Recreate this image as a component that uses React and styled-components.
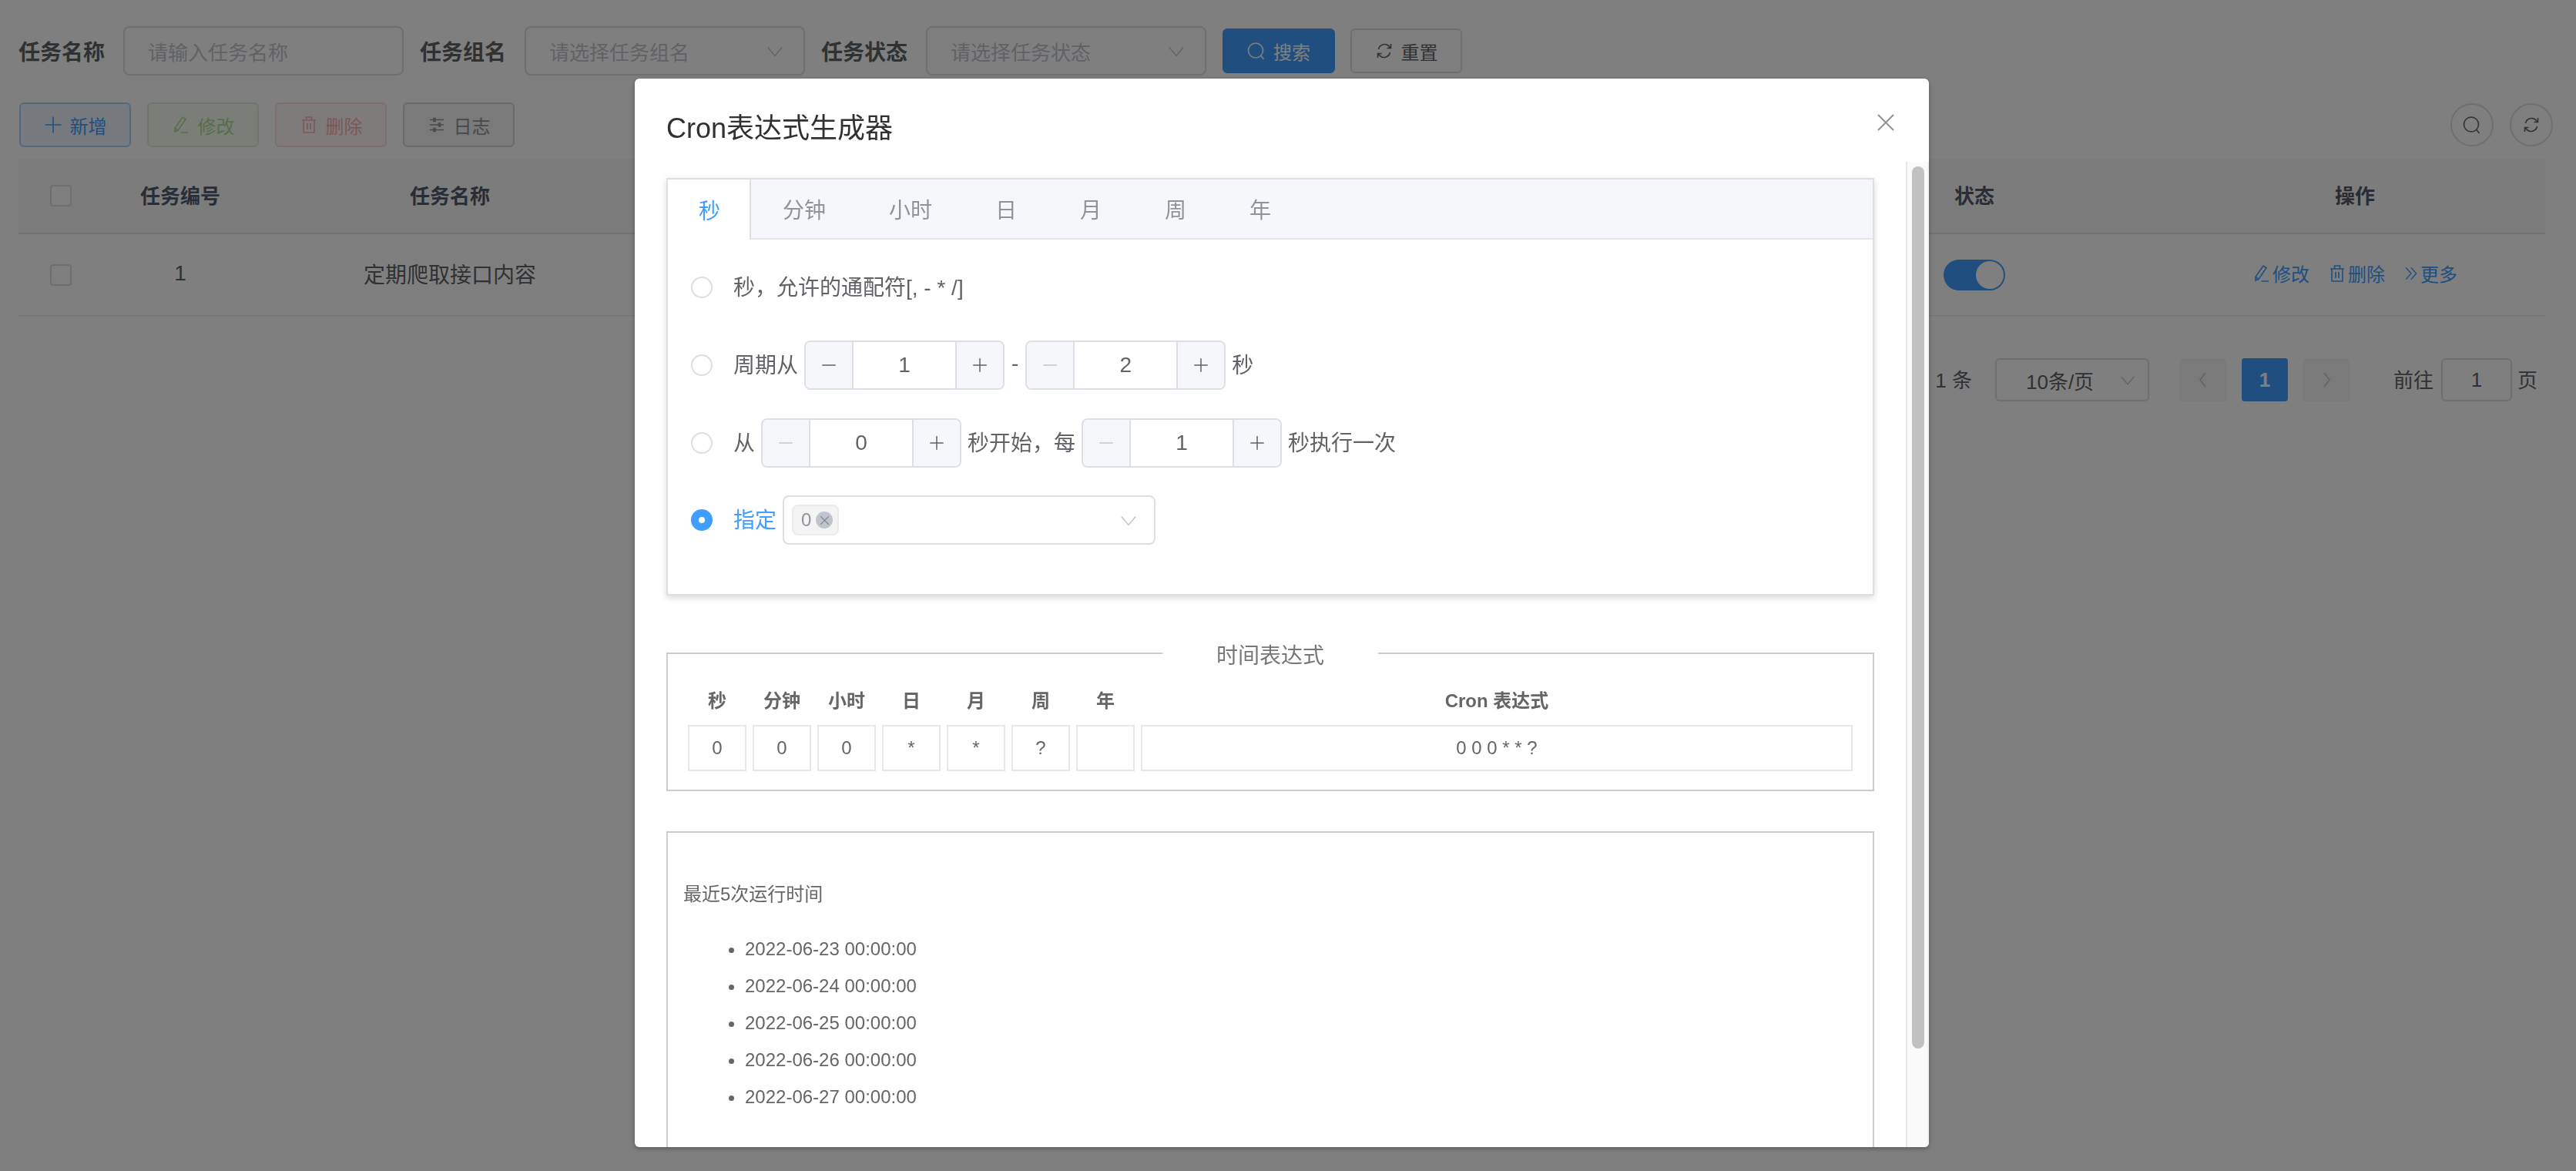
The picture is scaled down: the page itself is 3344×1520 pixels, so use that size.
import styled, { createGlobalStyle } from 'styled-components';

const FONT = `'Liberation Sans', 'Noto Sans CJK SC', sans-serif`;

const GlobalStyle = createGlobalStyle`
  html, body {
    margin: 0;
    height: 100%;
    overflow: hidden;
    background: #fff;
    font-family: ${FONT};
  }
  * { box-sizing: border-box; }
`;

const Svg = styled.svg`
  flex: none;
  fill: none;
  stroke: currentColor;
  stroke-width: ${(p) => p.$weight || 1.6};
`;

const icon = (d) =>
  function Icon({ size = 24, weight }) {
    return (
      <Svg $weight={weight} width={size} height={size} viewBox="0 0 24 24">
        <path d={d} />
      </Svg>
    );
  };

const PlusIcon = icon('M1.5 12H22.5M12 1.5V22.5');
const MinusIcon = icon('M1.5 12H22.5');
const EditIcon = icon('M4 16.5L14 2L18 4.8L8 19.3L4 21ZM4 16.5L8 19.3M11.5 22H21');
const TrashIcon = icon('M3 6H21M8.5 6V2H15.5V6M5 6V22H19V6M10 10V18M14 10V18');
const SlidersIcon = icon('M3 5.5H21M3 12H21M3 18.5H21M8 3.5H10V7.5H8ZM14.5 10H16.5V14H14.5ZM8 16.5H10V20.5H8Z');
const SearchIcon = icon('M11 2A9.5 9.5 0 1 0 11 21A9.5 9.5 0 1 0 11 2ZM17.5 18L21.5 23');
const RefreshIcon = icon('M4.5 10A8 8 0 0 1 18.5 6.5L20 8.5M19.5 14A8 8 0 0 1 5.5 17.5L4 15.5M20.5 3V8.5H15.5M3.5 21V15.5H8.5');
const DoubleArrowIcon = icon('M4 3L12 12L4 21M12 3L20 12L12 21');
const DownIcon = icon('M2 7L12 19L22 7');
const LeftIcon = icon('M15 3L8 12L15 21');
const RightIcon = icon('M9 3L16 12L9 21');
const CloseIcon = icon('M2 2L22 22M22 2L2 22');

const Page = styled.div`
  height: 1520px;
  padding-top: 34px;
  color: #606266;
`;

const SearchForm = styled.div`
  display: flex;
  align-items: center;
  padding-left: 24px;
`;

const FormLabel = styled.label`
  width: 112px;
  margin-right: 24px;
  font-size: 28px;
  font-weight: 700;
  white-space: nowrap;
`;

const FormField = styled.div`
  display: flex;
  align-items: center;
  justify-content: space-between;
  width: 364px;
  height: 64px;
  margin-right: 21px;
  padding: 0 26px 0 30px;
  border: 2px solid #dcdfe6;
  border-radius: 8px;
  font-size: 26px;
  color: #c0c4cc;
`;

const MiniButton = styled.div`
  display: flex;
  align-items: center;
  justify-content: center;
  gap: 10px;
  width: ${(p) => p.$width || 145}px;
  height: ${(p) => p.$height || 58}px;
  border: 2px solid ${(p) => p.$border};
  border-radius: 6px;
  background: ${(p) => p.$bg};
  color: ${(p) => p.$color};
  font-size: 24px;
  opacity: ${(p) => (p.$disabled ? 0.55 : 1)};
`;

const FormButtons = styled.div`
  display: flex;
  gap: 20px;
`;

const Toolbar = styled.div`
  display: flex;
  align-items: center;
  justify-content: space-between;
  margin-top: 35px;
  padding: 0 30px 0 25px;
`;

const ButtonGroup = styled.div`
  display: flex;
  gap: 21px;
`;

const CircleButton = styled.div`
  display: flex;
  align-items: center;
  justify-content: center;
  width: 56px;
  height: 56px;
  border: 2px solid #dcdfe6;
  border-radius: 50%;
  color: #606266;
`;

const Table = styled.div`
  margin-top: 15px;
`;

const TableRow = styled.div`
  display: grid;
  grid-template-columns: 110px 200px 500px 1482px 494px 494px;
  align-items: center;
  margin: 0 40px 0 24px;
  height: ${(p) => (p.$head ? 98 : 107)}px;
  background: ${(p) => (p.$head ? '#f8f8f9' : '#fff')};
  border-bottom: 2px solid ${(p) => (p.$head ? '#dfe6ec' : '#ebeef5')};
  color: ${(p) => (p.$head ? '#515a6e' : '#606266')};
  font-size: ${(p) => (p.$head ? 26 : 28)}px;
  font-weight: ${(p) => (p.$head ? 700 : 400)};
  text-align: center;
`;

const Cell = styled.div`
  display: flex;
  align-items: center;
  justify-content: center;
  padding-bottom: ${(p) => (p.$text ? 4 : 0)}px;
`;

const Checkbox = styled.span`
  width: 28px;
  height: 28px;
  border: 2px solid #dcdfe6;
  border-radius: 4px;
  background: #fff;
`;

const Switch = styled.span`
  display: flex;
  justify-content: flex-end;
  align-items: center;
  width: 80px;
  height: 40px;
  padding: 2px;
  border-radius: 20px;
  background: #409eff;
  &::after {
    content: '';
    width: 36px;
    height: 36px;
    border-radius: 50%;
    background: #fff;
  }
`;

const Actions = styled.div`
  display: flex;
  justify-content: center;
  gap: 24px;
  color: #409eff;
  font-size: 24px;
`;

const ActionLink = styled.span`
  display: flex;
  align-items: center;
  gap: 2px;
`;

const Pagination = styled.div`
  display: flex;
  align-items: center;
  justify-content: flex-end;
  height: 56px;
  margin-top: 54px;
  padding-right: 50px;
  font-size: 26px;
`;

const PageText = styled.span`
  padding-bottom: 4px;
`;

const PageSize = styled.div`
  display: flex;
  align-items: center;
  justify-content: space-between;
  width: 200px;
  height: 56px;
  margin: 0 40px 0 30px;
  padding: 0 16px 0 38px;
  border: 2px solid #dcdfe6;
  border-radius: 6px;
  color: #606266;
  svg { color: #c0c4cc; }
`;

const PagerList = styled.div`
  display: flex;
  gap: 20px;
  margin-right: 57px;
`;

const Pager = styled.div`
  display: flex;
  align-items: center;
  justify-content: center;
  width: 60px;
  height: 56px;
  border-radius: 4px;
  background: ${(p) => (p.$active ? '#409eff' : '#f4f4f5')};
  color: ${(p) => (p.$active ? '#fff' : '#c0c4cc')};
  font-weight: 700;
`;

const PageJump = styled.div`
  display: flex;
  align-items: center;
  justify-content: center;
  width: 92px;
  height: 56px;
  margin: 0 7px 0 10px;
  border: 2px solid #dcdfe6;
  border-radius: 6px;
`;

const Overlay = styled.div`
  position: fixed;
  inset: 0;
  background: rgba(0, 0, 0, 0.5);
`;

const Dialog = styled.div`
  display: flex;
  flex-direction: column;
  width: 1680px;
  height: 1387px;
  margin: 102px 0 0 824px;
  border-radius: 6px;
  background: #fff;
  box-shadow: 0 2px 6px rgba(0, 0, 0, 0.3);
  overflow: hidden;
`;

const DialogHeader = styled.div`
  display: flex;
  align-items: flex-start;
  justify-content: space-between;
  flex: none;
  height: 108px;
  padding: 47px 44px 0 41px;
`;

const DialogTitle = styled.span`
  font-size: 36px;
  line-height: 36px;
  color: #303133;
`;

const CloseButton = styled.span`
  display: flex;
  margin-top: -2px;
  color: #909399;
`;

const DialogBody = styled.div`
  display: flex;
  flex: 1;
  min-height: 0;
`;

const DialogScroll = styled.div`
  flex: 1;
  min-width: 0;
  overflow: hidden;
  padding: 21px 41px 0;
`;

const ScrollTrack = styled.div`
  flex: none;
  width: 30px;
  padding: 6px 0 0 6px;
  background: #fafafa;
  border-left: 2px solid #e8e8e8;
  border-right: 2px solid #f1f1f1;
`;

const ScrollThumb = styled.div`
  width: 16px;
  height: 1145px;
  border-radius: 8px;
  background: #c1c1c1;
`;

const Tabs = styled.div`
  height: 542px;
  border: 2px solid #dcdfe6;
  background: #fff;
  box-shadow: 0 4px 8px 0 rgba(0, 0, 0, 0.12), 0 0 12px 0 rgba(0, 0, 0, 0.04);
`;

const TabBar = styled.div`
  display: flex;
  height: 78px;
  background: #f5f7fa;
  border-bottom: 2px solid #e4e7ed;
  font-size: 28px;
  color: #909399;
`;

const Tab = styled.div`
  display: flex;
  align-items: center;
  padding: 0 ${(p) => (p.$active ? 38 : 41)}px 0 ${(p) => (p.$active ? 40 : 41)}px;
  height: ${(p) => (p.$active ? 78 : 76)}px;
  background: ${(p) => (p.$active ? '#fff' : 'transparent')};
  border-right: ${(p) => (p.$active ? '2px solid #dcdfe6' : 'none')};
  color: ${(p) => (p.$active ? '#409eff' : '#909399')};
`;

const TabPane = styled.div`
  padding: 12px 0 0 30px;
`;

const OptionRow = styled.div`
  display: flex;
  align-items: center;
  gap: 8px;
  height: 100.7px;
  font-size: 28px;
  color: #606266;
`;

const OptionText = styled.span`
  padding-bottom: 4px;
  color: ${(p) => (p.$active ? '#409eff' : 'inherit')};
`;

const Radio = styled.span`
  display: flex;
  align-items: center;
  justify-content: center;
  width: 28px;
  height: 28px;
  margin-right: 19px;
  border-radius: 50%;
  border: 2px solid ${(p) => (p.$checked ? '#409eff' : '#dcdfe6')};
  background: ${(p) => (p.$checked ? '#409eff' : '#fff')};
  &::after {
    content: '';
    width: 8px;
    height: 8px;
    border-radius: 50%;
    background: #fff;
  }
`;

const Dash = styled.span`
  padding: 0 1px 4px;
`;

const NumberBox = styled.div`
  display: grid;
  grid-template-columns: 62px 1fr 62px;
  align-items: stretch;
  width: 260px;
  height: 64px;
  border: 2px solid #dcdfe6;
  border-radius: 8px;
  overflow: hidden;
`;

const NumberValue = styled.div`
  display: flex;
  align-items: center;
  justify-content: center;
  color: #606266;
  font-size: 28px;
`;

const NumberStep = styled.div`
  display: flex;
  align-items: center;
  justify-content: center;
  background: #f5f7fa;
  color: ${(p) => (p.$disabled ? '#c0c4cc' : '#606266')};
  border-${(p) => p.$side}: 2px solid #dcdfe6;
`;

const SelectBox = styled.div`
  display: flex;
  align-items: center;
  justify-content: space-between;
  width: 484px;
  height: 64px;
  padding: 0 22px 0 10px;
  border: 2px solid #dcdfe6;
  border-radius: 8px;
  svg { color: #c0c4cc; }
`;

const Tag = styled.span`
  display: flex;
  align-items: center;
  gap: 6px;
  height: 40px;
  padding: 0 6px 0 10px;
  border: 2px solid #ebebed;
  border-radius: 8px;
  background: #f4f4f5;
  color: #909399;
  font-size: 24px;
`;

const TagClose = styled.span`
  display: flex;
  align-items: center;
  justify-content: center;
  width: 22px;
  height: 22px;
  border-radius: 50%;
  background: #c0c4cc;
  color: #909399;
  svg { color: #808389; }
`;

const Fieldset = styled.fieldset`
  margin: 56px 0 0;
  padding: 27px 26px 24px;
  border: 2px solid #ccc;
  min-width: 0;
`;

const Legend = styled.legend`
  margin: 0 auto;
  padding: 8px 70px 0;
  font-size: 28px;
  line-height: 30px;
  color: #777;
`;

const CronGrid = styled.div`
  display: grid;
  grid-template-columns: repeat(7, 76px) 1fr;
  grid-template-rows: 32px 60px;
  gap: 15px 8px;
  color: #666;
  font-size: 24px;
  text-align: center;
`;

const CronHead = styled.div`
  font-weight: 700;
  line-height: 32px;
`;

const CronCell = styled.div`
  border: 2px solid #e8e8e8;
  line-height: 56px;
`;

const ResultBox = styled.div`
  height: 500px;
  margin: 52px 0 47px;
  padding: 64px 20px 0;
  border: 2px solid #ccc;
  color: #666;
  font-size: 24px;
`;

const ResultTitle = styled.div`
  line-height: 32px;
`;

const ResultList = styled.ul`
  margin: 31px 0 0;
  padding-left: 80px;
  line-height: 48px;
`;

const heads = ['秒', '分钟', '小时', '日', '月', '周', '年', 'Cron 表达式'];
const cells = ['0', '0', '0', '*', '*', '?', '', '0 0 0 * * ?'];
const tabs = ['秒', '分钟', '小时', '日', '月', '周', '年'];
const dates = ['2022-06-23', '2022-06-24', '2022-06-25', '2022-06-26', '2022-06-27'];

function NumberInput({ value, lowDisabled }) {
  return (
    <NumberBox>
      <NumberStep $side="right" $disabled={lowDisabled}>
        <MinusIcon size={20} weight={1.8} />
      </NumberStep>
      <NumberValue>{value}</NumberValue>
      <NumberStep $side="left">
        <PlusIcon size={20} weight={1.8} />
      </NumberStep>
    </NumberBox>
  );
}

function Background() {
  return (
    <Page>
      <SearchForm>
        <FormLabel>任务名称</FormLabel>
        <FormField>请输入任务名称</FormField>
        <FormLabel>任务组名</FormLabel>
        <FormField>
          请选择任务组名
          <DownIcon size={22} />
        </FormField>
        <FormLabel>任务状态</FormLabel>
        <FormField>
          请选择任务状态
          <DownIcon size={22} />
        </FormField>
        <FormButtons>
          <MiniButton $width={146} $border="#409eff" $bg="#409eff" $color="#fff">
            <SearchIcon />
            搜索
          </MiniButton>
          <MiniButton $border="#dcdfe6" $bg="#fff" $color="#606266">
            <RefreshIcon />
            重置
          </MiniButton>
        </FormButtons>
      </SearchForm>

      <Toolbar>
        <ButtonGroup>
          <MiniButton $border="#a3d0fd" $bg="#ecf5ff" $color="#409eff">
            <PlusIcon />
            新增
          </MiniButton>
          <MiniButton $disabled $border="#c2e7b0" $bg="#f0f9eb" $color="#67c23a">
            <EditIcon />
            修改
          </MiniButton>
          <MiniButton $disabled $border="#fbc4c4" $bg="#fef0f0" $color="#f56c6c">
            <TrashIcon />
            删除
          </MiniButton>
          <MiniButton $border="#d3d4d6" $bg="#f4f4f5" $color="#909399">
            <SlidersIcon />
            日志
          </MiniButton>
        </ButtonGroup>
        <ButtonGroup>
          <CircleButton>
            <SearchIcon />
          </CircleButton>
          <CircleButton>
            <RefreshIcon />
          </CircleButton>
        </ButtonGroup>
      </Toolbar>

      <Table>
        <TableRow $head>
          <Cell>
            <Checkbox />
          </Cell>
          <Cell $text>任务编号</Cell>
          <Cell $text>任务名称</Cell>
          <Cell />
          <Cell $text>状态</Cell>
          <Cell $text>操作</Cell>
        </TableRow>
        <TableRow>
          <Cell>
            <Checkbox />
          </Cell>
          <Cell $text>1</Cell>
          <Cell $text>定期爬取接口内容</Cell>
          <Cell />
          <Cell>
            <Switch />
          </Cell>
          <Cell $text>
            <Actions>
              <ActionLink>
                <EditIcon />
                修改
              </ActionLink>
              <ActionLink>
                <TrashIcon />
                删除
              </ActionLink>
              <ActionLink>
                <DoubleArrowIcon size={20} />
                更多
              </ActionLink>
            </Actions>
          </Cell>
        </TableRow>
      </Table>

      <Pagination>
        <PageText>共 1 条</PageText>
        <PageSize>
          10条/页
          <DownIcon size={20} />
        </PageSize>
        <PagerList>
          <Pager>
            <LeftIcon />
          </Pager>
          <Pager $active>1</Pager>
          <Pager>
            <RightIcon />
          </Pager>
        </PagerList>
        <PageText>前往</PageText>
        <PageJump>1</PageJump>
        <PageText>页</PageText>
      </Pagination>
    </Page>
  );
}

function CronDialog() {
  return (
    <Dialog>
      <DialogHeader>
        <DialogTitle>Cron表达式生成器</DialogTitle>
        <CloseButton>
          <CloseIcon size={24} weight={2} />
        </CloseButton>
      </DialogHeader>
      <DialogBody>
        <DialogScroll>
          <Tabs>
            <TabBar>
              {tabs.map((t, i) => (
                <Tab key={t} $active={i === 0}>
                  {t}
                </Tab>
              ))}
            </TabBar>
            <TabPane>
              <OptionRow>
                <Radio />
                <OptionText>秒，允许的通配符[, - * /]</OptionText>
              </OptionRow>
              <OptionRow>
                <Radio />
                <OptionText>周期从</OptionText>
                <NumberInput value="1" />
                <Dash>-</Dash>
                <NumberInput value="2" lowDisabled />
                <OptionText>秒</OptionText>
              </OptionRow>
              <OptionRow>
                <Radio />
                <OptionText>从</OptionText>
                <NumberInput value="0" lowDisabled />
                <OptionText>秒开始，每</OptionText>
                <NumberInput value="1" lowDisabled />
                <OptionText>秒执行一次</OptionText>
              </OptionRow>
              <OptionRow>
                <Radio $checked />
                <OptionText $active>指定</OptionText>
                <SelectBox>
                  <Tag>
                    0
                    <TagClose>
                      <CloseIcon size={13} weight={2.2} />
                    </TagClose>
                  </Tag>
                  <DownIcon size={22} />
                </SelectBox>
              </OptionRow>
            </TabPane>
          </Tabs>

          <Fieldset>
            <Legend>时间表达式</Legend>
            <CronGrid>
              {heads.map((h) => (
                <CronHead key={h}>{h}</CronHead>
              ))}
              {cells.map((c, i) => (
                <CronCell key={i}>{c}</CronCell>
              ))}
            </CronGrid>
          </Fieldset>

          <ResultBox>
            <ResultTitle>最近5次运行时间</ResultTitle>
            <ResultList>
              {dates.map((d) => (
                <li key={d}>{d} 00:00:00</li>
              ))}
            </ResultList>
          </ResultBox>
        </DialogScroll>
        <ScrollTrack>
          <ScrollThumb />
        </ScrollTrack>
      </DialogBody>
    </Dialog>
  );
}

export default function App() {
  return (
    <>
      <GlobalStyle />
      <Background />
      <Overlay>
        <CronDialog />
      </Overlay>
    </>
  );
}
